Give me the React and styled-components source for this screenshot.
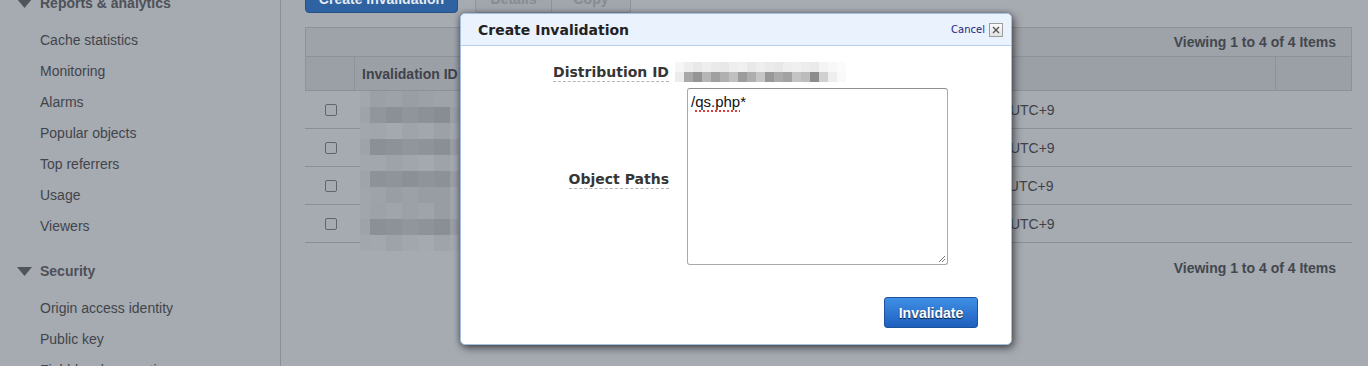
import React from "react";
import styled, { createGlobalStyle } from "styled-components";

const GlobalStyle = createGlobalStyle`
  html, body { margin: 0; padding: 0; }
  body {
    background: #a6aab1;
    font-family: "Liberation Sans", Arial, Helvetica, sans-serif;
    overflow: hidden;
  }
  #root { height: 366px; }
`;

const Page = styled.div`
  position: relative;
  display: flex;
  height: 366px;
  overflow: hidden;
  background: #a6aab1;
`;

/* ---------- Sidebar ---------- */
const Sidebar = styled.nav`
  width: 280px;
  flex-shrink: 0;
  border-right: 1px solid #8b8f96;
`;

const SidebarInner = styled.div`
  margin-top: -7px;
`;

const Section = styled.section`
  margin-bottom: 19px;
`;

const SectionHeader = styled.div`
  display: flex;
  align-items: center;
  height: 20px;
  padding-left: 17px;
  margin-bottom: 12px;
  font-size: 14px;
  font-weight: bold;
  color: #4d5158;
  svg { margin-right: 8px; }
`;

const NavItem = styled.div`
  padding-left: 40px;
  line-height: 31px;
  font-size: 14px;
  color: #41454b;
  white-space: nowrap;
`;

const Caret = () => (
  <svg width="15" height="9" viewBox="0 0 15 9">
    <polygon points="0,0 15,0 7.5,9" fill="#50545b" />
  </svg>
);

/* ---------- Main ---------- */
const Main = styled.main`
  flex: 1;
  min-width: 0;
  padding: 0 16px 0 24px;
`;

const Toolbar = styled.div`
  display: flex;
  height: 28px;
  margin-top: -15px;
`;

const PrimaryButton = styled.div`
  width: 153px;
  display: flex;
  align-items: center;
  justify-content: center;
  background: #2e62a0;
  border: 1px solid #26528a;
  border-radius: 4px;
  box-sizing: border-box;
  color: #e6ebf2;
  font-size: 14px;
  font-weight: bold;
`;

const ButtonGroup = styled.div`
  display: flex;
  margin-left: 17px;
`;

const GroupButton = styled.div`
  width: ${(p) => p.$w}px;
  display: flex;
  align-items: center;
  justify-content: center;
  box-sizing: border-box;
  background: #a1a5ac;
  border: 1px solid #8f939a;
  border-left-width: ${(p) => (p.$first ? 1 : 0)}px;
  border-radius: ${(p) => (p.$first ? "3px 0 0 3px" : "0 3px 3px 0")};
  color: #878b92;
  font-size: 14px;
  font-weight: bold;
`;

const Table = styled.div`
  margin-top: 14px;
`;

const TableHead = styled.div`
  border: 1px solid #8e9298;
`;

const TopBar = styled.div`
  height: 28px;
  display: flex;
  align-items: center;
  justify-content: flex-end;
  padding-right: 15px;
  background: #9ea2a9;
  border-bottom: 1px solid #8e9298;
  font-size: 14px;
  font-weight: bold;
  color: #43474e;
`;

const COLS = "48px 514px 1fr 76px";

const HeaderRow = styled.div`
  display: grid;
  grid-template-columns: ${COLS};
  height: 33px;
  background: #9b9fa6;
`;

const HeaderCell = styled.div`
  display: flex;
  align-items: center;
  padding-left: 7px;
  border-left: ${(p) => (p.$first ? "none" : "1px solid #8e9298")};
  font-size: 14px;
  font-weight: bold;
  color: #3f434a;
  white-space: nowrap;
  overflow: hidden;
`;

const TableBody = styled.div`
  position: relative;
`;

const BodyRow = styled.div`
  display: grid;
  grid-template-columns: ${COLS};
  height: 37px;
  padding: 0 1px;
  border-bottom: 1px solid #8a8e95;
`;

const Cell = styled.div`
  display: flex;
  align-items: center;
  justify-content: ${(p) => (p.$center ? "center" : "flex-start")};
  padding-left: ${(p) => (p.$center ? 0 : 8)}px;
  font-size: 14px;
  color: #3e4248;
  white-space: nowrap;
  overflow: hidden;
`;

const Checkbox = styled.span`
  width: 12px;
  height: 12px;
  box-sizing: border-box;
  border: 1px solid #60646b;
  border-radius: 2px;
  margin-left: 1px;
`;

const Footer = styled.div`
  display: flex;
  justify-content: flex-end;
  padding: 15px 16px 0 0;
  line-height: 20px;
  font-size: 14px;
  font-weight: bold;
  color: #43474e;
`;

const BlurOverlay = styled.svg`
  position: absolute;
  left: 55px;
  top: 0;
`;

/* ---------- Modal ---------- */
const Modal = styled.div`
  position: absolute;
  left: 460px;
  top: 13px;
  width: 552px;
  height: 332px;
  box-sizing: border-box;
  background: #ffffff;
  border: 1px solid #a3bfe1;
  border-radius: 5px;
  box-shadow: 2px 3px 9px rgba(0, 0, 0, 0.55), -1px 0 5px rgba(0, 0, 0, 0.25);
  display: flex;
  flex-direction: column;
`;

const ModalHeader = styled.div`
  height: 31px;
  display: flex;
  align-items: center;
  padding: 0 8px 0 17px;
  background: #eaf2fd;
  border-bottom: 1px solid #b7cfec;
  border-radius: 4px 4px 0 0;
`;

const ModalTitle = styled.div`
  flex: 1;
  font-family: "DejaVu Sans", Verdana, sans-serif;
  font-size: 14px;
  font-weight: bold;
  color: #222;
`;

const CancelLink = styled.span`
  font-family: "DejaVu Sans", Verdana, sans-serif;
  font-size: 10px;
  color: #25257d;
  margin-right: 4px;
`;

const CloseBox = styled.span`
  width: 14px;
  height: 14px;
  box-sizing: border-box;
  border: 1px solid #9c9c9c;
  background: linear-gradient(#fbfbfb, #e2e2e2);
  display: flex;
  align-items: center;
  justify-content: center;
`;

const ModalBody = styled.div`
  padding-top: 16px;
`;

const FieldRow = styled.div`
  display: grid;
  grid-template-columns: 208px 1fr;
  column-gap: 18px;
  align-items: center;
  margin-top: ${(p) => p.$mt || 0}px;
`;

const LabelCell = styled.div`
  text-align: right;
  padding-top: ${(p) => p.$pt || 0}px;
`;

const FieldLabel = styled.span`
  display: inline-block;
  line-height: 17px;
  border-bottom: 1px dashed #b4b4b4;
  font-family: "DejaVu Sans", Verdana, sans-serif;
  font-size: 14px;
  font-weight: bold;
  color: #363636;
`;

const ValueMosaic = styled.svg`
  display: block;
  margin-left: -12px;
`;

const TextArea = styled.div`
  position: relative;
  width: 261px;
  height: 177px;
  box-sizing: border-box;
  border: 1px solid #a9a9a9;
  border-top-color: #8f8f8f;
  border-radius: 3px;
  padding: 4px 3px;
  font-family: "Liberation Sans", Arial, sans-serif;
  font-size: 15px;
  line-height: 18px;
  color: #111;
`;

const Misspelled = styled.span`
  text-decoration: underline dotted #e23b3b;
  text-decoration-thickness: 2px;
  text-underline-offset: 3px;
`;

const Grip = styled.svg`
  position: absolute;
  right: 1px;
  bottom: 1px;
`;

const ButtonRow = styled.div`
  display: flex;
  justify-content: flex-end;
  padding-right: 33px;
  margin-top: 32px;
`;

const InvalidateButton = styled.div`
  width: 94px;
  height: 31px;
  box-sizing: border-box;
  display: flex;
  align-items: center;
  justify-content: center;
  background: linear-gradient(#3f90e6, #1e5fbe);
  border: 1px solid #1c549c;
  border-radius: 3px;
  color: #fff;
  font-size: 14px;
  font-weight: bold;
  text-shadow: 0 1px 1px rgba(0, 0, 0, 0.75);
`;

/* ---------- Mosaics (pixelated redactions) ---------- */
const ID_BANDS = [1, 3, 0.3, 3, 0.3, 3, 1.2, 0.8, 3, 0.2];
const ID_COLS = [
  [0, 10, 0.25],
  [10, 16, 1],
  [26, 16, 1.05],
  [42, 16, 1],
  [58, 16, 0.95],
  [74, 16, 1.3],
  [90, 8, 0.45],
  [98, 4, 0.2],
];

const IdMosaic = () => {
  const rects = [];
  ID_BANDS.forEach((lvl, i) => {
    ID_COLS.forEach(([x, w, f], j) => {
      const jitter = (((i * 7 + j * 13) % 5) - 2) * 1.5;
      const v = Math.round(167 - lvl * 7 * f - jitter * f);
      rects.push(
        <rect
          key={`${i}-${j}`}
          x={x}
          y={i * 16}
          width={w}
          height={16}
          fill={`rgb(${v - 4},${v},${v + 7})`}
        />
      );
    });
  });
  return (
    <BlurOverlay width="100" height="161" viewBox="0 0 100 161">
      {rects}
    </BlurOverlay>
  );
};

const DIST_TOP = [246, 238, 232, 238, 234, 232, 238, 240, 232, 238, 234, 232, 238, 240, 236, 234, 244, 248, 251];
const DIST_BOT = [236, 168, 148, 182, 160, 176, 192, 156, 174, 198, 152, 170, 162, 196, 188, 140, 208, 238, 249];

const DistMosaic = () => (
  <ValueMosaic width="171" height="20" viewBox="0 0 171 20">
    {DIST_TOP.map((v, i) => (
      <rect key={`t${i}`} x={i * 9} y={0} width={9} height={10} fill={`rgb(${v},${v},${v})`} />
    ))}
    {DIST_BOT.map((v, i) => (
      <rect key={`b${i}`} x={i * 9} y={10} width={9} height={10} fill={`rgb(${v},${v},${v})`} />
    ))}
  </ValueMosaic>
);

const rows = [
  "2021-03-05 10:12:33 UTC+9",
  "2021-02-18 16:40:02 UTC+9",
  "2021-02-03 11:05:47 UTC+9",
  "2021-01-22 09:31:15 UTC+9",
];

export default function App() {
  return (
    <>
      <GlobalStyle />
      <Page>
        <Sidebar>
          <SidebarInner>
            <Section>
              <SectionHeader>
                <Caret />
                Reports &amp; analytics
              </SectionHeader>
              {["Cache statistics", "Monitoring", "Alarms", "Popular objects", "Top referrers", "Usage", "Viewers"].map((t) => (
                <NavItem key={t}>{t}</NavItem>
              ))}
            </Section>
            <Section>
              <SectionHeader>
                <Caret />
                Security
              </SectionHeader>
              {["Origin access identity", "Public key", "Field-level encryption"].map((t) => (
                <NavItem key={t}>{t}</NavItem>
              ))}
            </Section>
          </SidebarInner>
        </Sidebar>

        <Main>
          <Toolbar>
            <PrimaryButton>Create Invalidation</PrimaryButton>
            <ButtonGroup>
              <GroupButton $w={77} $first>Details</GroupButton>
              <GroupButton $w={79}>Copy</GroupButton>
            </ButtonGroup>
          </Toolbar>

          <Table>
            <TableHead>
              <TopBar>Viewing 1 to 4 of 4 Items</TopBar>
              <HeaderRow>
                <HeaderCell $first />
                <HeaderCell>Invalidation ID</HeaderCell>
                <HeaderCell>Date</HeaderCell>
                <HeaderCell />
              </HeaderRow>
            </TableHead>
            <TableBody>
              {rows.map((d) => (
                <BodyRow key={d}>
                  <Cell $center>
                    <Checkbox />
                  </Cell>
                  <Cell>I2ABCDEFGHIJK</Cell>
                  <Cell>{d}</Cell>
                  <Cell />
                </BodyRow>
              ))}
              <IdMosaic />
            </TableBody>
            <Footer>Viewing 1 to 4 of 4 Items</Footer>
          </Table>
        </Main>

        <Modal>
          <ModalHeader>
            <ModalTitle>Create Invalidation</ModalTitle>
            <CancelLink>Cancel</CancelLink>
            <CloseBox>
              <svg width="8" height="8" viewBox="0 0 8 8">
                <path d="M1 1L7 7M7 1L1 7" stroke="#555" strokeWidth="1.4" />
              </svg>
            </CloseBox>
          </ModalHeader>
          <ModalBody>
            <FieldRow>
              <LabelCell>
                <FieldLabel>Distribution ID</FieldLabel>
              </LabelCell>
              <DistMosaic />
            </FieldRow>
            <FieldRow $mt={6}>
              <LabelCell $pt={6}>
                <FieldLabel>Object Paths</FieldLabel>
              </LabelCell>
              <TextArea>
                /<Misspelled>qs.php</Misspelled>*
                <Grip width="8" height="8" viewBox="0 0 8 8">
                  <path d="M7 1L1 7M7 4L4 7" stroke="#777" strokeWidth="1" />
                </Grip>
              </TextArea>
            </FieldRow>
            <ButtonRow>
              <InvalidateButton>Invalidate</InvalidateButton>
            </ButtonRow>
          </ModalBody>
        </Modal>
      </Page>
    </>
  );
}
